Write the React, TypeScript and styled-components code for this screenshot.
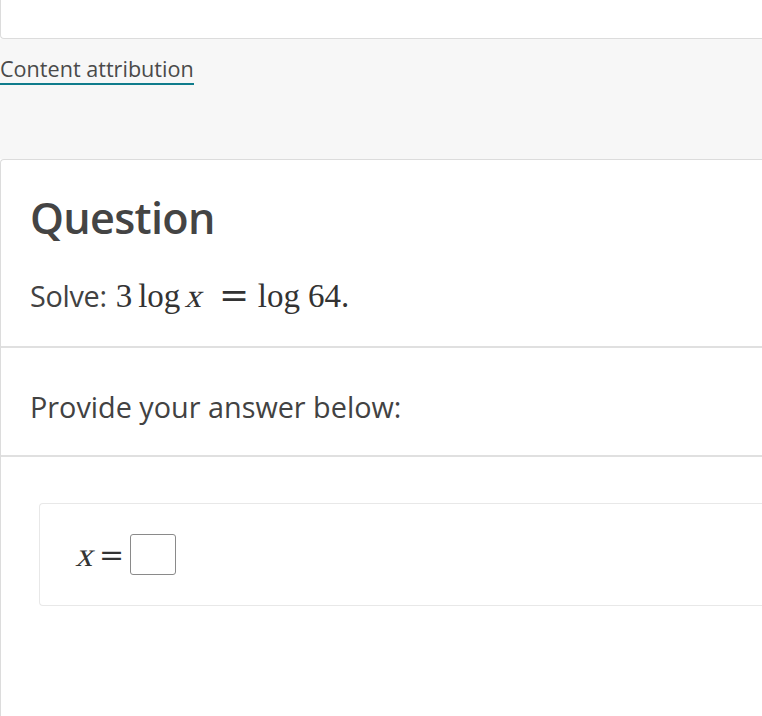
import React from "react";
import styled, { createGlobalStyle } from "styled-components";

const Global = createGlobalStyle`
  html, body { margin: 0; padding: 0; background: #ffffff; overflow: hidden; }
  body { font-family: "Open Sans", "Noto Sans", sans-serif; color: #424242; }
`;

const Page = styled.div`
  width: 800px;
  height: 716px;
  display: flex;
  flex-direction: column;
`;

const TopCard = styled.div`
  height: 38px;
  background: #ffffff;
  border-left: 1px solid #dcdcdc;
  border-bottom: 1px solid #dcdcdc;
  border-bottom-left-radius: 4px;
`;

const Gray = styled.div`
  background: #f7f7f7;
  height: 120px;
  padding-top: 17px;
  box-sizing: border-box;
`;

const Attribution = styled.a`
  display: inline-block;
  font-size: 21.6px;
  line-height: 26px;
  color: #4a4a4a;
  text-decoration: none;
  border-bottom: 2px solid #0f7c8c;
  padding-bottom: 1px;
`;

const QuestionCard = styled.div`
  flex: 1;
  background: #ffffff;
  border-top: 1px solid #dcdcdc;
  border-left: 1px solid #dcdcdc;
  border-top-left-radius: 4px;
  display: flex;
  flex-direction: column;
`;

const Section = styled.div<{ $h: number; $pt: number }>`
  height: ${(p) => p.$h}px;
  padding: ${(p) => p.$pt}px 0 0 29px;
  box-sizing: border-box;
  border-bottom: 2px solid #e0e0e0;
`;

const Heading = styled.h2`
  margin: 0;
  font-size: 43.2px;
  font-weight: 600;
  letter-spacing: -0.7px;
  line-height: 52px;
  color: #444444;
`;

const Prompt = styled.p`
  margin: 32px 0 0 0;
  font-size: 28.8px;
  line-height: 40px;
  height: 40px;
  color: #424242;
  display: flex;
  align-items: baseline;
  letter-spacing: -0.3px;
`;

const MathText = styled.span<{ $ml: number }>`
  font-family: "Liberation Serif", serif;
  font-size: 33px;
  line-height: 1;
  letter-spacing: 0;
  color: #333;
  margin-left: ${(p) => p.$ml}px;
`;

const MathVar = styled.span<{ $size: number; $ml?: number }>`
  display: inline-block;
  font-family: "Liberation Serif", serif;
  font-size: ${(p) => p.$size}px;
  line-height: 1;
  letter-spacing: 0;
  color: #333;
  transform: skewX(-14deg);
  margin-left: ${(p) => p.$ml ?? 0}px;
`;

const EqSign = styled.span<{ $size: number; $ml: number; $mr: number }>`
  font-family: "DejaVu Serif", serif;
  font-size: ${(p) => p.$size}px;
  line-height: 1;
  color: #333;
  margin: 0 ${(p) => p.$mr}px 0 ${(p) => p.$ml}px;
`;

const Label = styled.p`
  margin: 0;
  font-size: 28.8px;
  line-height: 40px;
  color: #424242;
`;

const AnswerArea = styled.div`
  padding: 46px 0 0 38px;
`;

const AnswerBox = styled.div`
  height: 103px;
  border: 1px solid #e8e8e8;
  border-right: none;
  border-radius: 4px 0 0 4px;
  display: flex;
  align-items: center;
  padding-left: 38px;
  box-sizing: border-box;
`;

const MathRow = styled.div`
  display: flex;
  align-items: center;
`;

const Input = styled.div`
  width: 44px;
  height: 39px;
  border: 1px solid #8a8a8a;
  border-radius: 3px;
  background: #fff;
`;

export default function App() {
  return (
    <Page>
      <Global />
      <TopCard />
      <Gray>
        <Attribution href="#">Content attribution</Attribution>
      </Gray>
      <QuestionCard>
        <Section $h={188} $pt={32}>
          <Heading>Question</Heading>
          <Prompt>
            Solve:
            <MathText $ml={9}>3</MathText>
            <MathText $ml={6}>log</MathText>
            <MathVar $size={33} $ml={7}>x</MathVar>
            <EqSign $size={36} $ml={15} $mr={9}>=</EqSign>
            <MathText $ml={0}>log</MathText>
            <MathText $ml={8}>64.</MathText>
          </Prompt>
        </Section>
        <Section $h={109} $pt={39}>
          <Label>Provide your answer below:</Label>
        </Section>
        <AnswerArea>
          <AnswerBox>
            <MathRow>
              <MathVar $size={34}>x</MathVar>
              <EqSign $size={30} $ml={4} $mr={6}>=</EqSign>
              <Input />
            </MathRow>
          </AnswerBox>
        </AnswerArea>
      </QuestionCard>
    </Page>
  );
}
